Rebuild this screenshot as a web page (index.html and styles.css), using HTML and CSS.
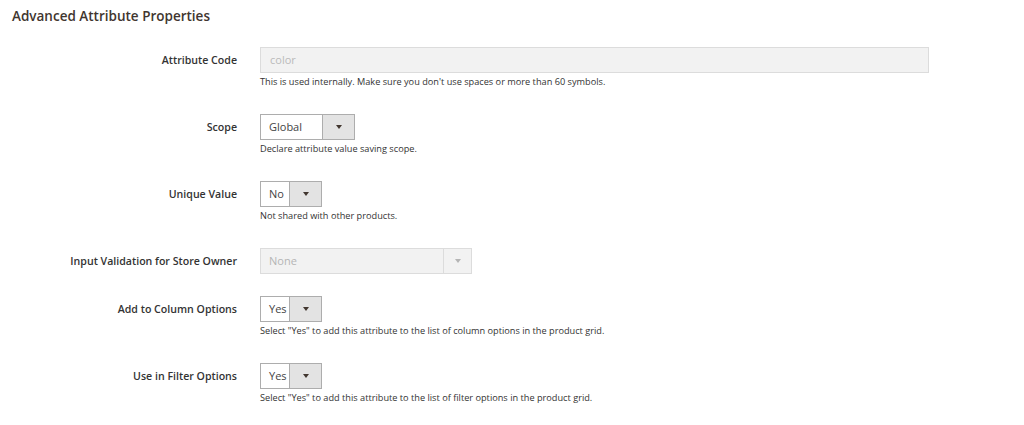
FILE: index.html
```html
<!DOCTYPE html>
<html lang="en">
<head>
    <meta charset="UTF-8">
    <meta name="viewport" content="width=device-width, initial-scale=1.0">
    <title>Advanced Attribute Properties</title>
    <link rel="stylesheet" href="styles.css">
</head>
<body>
<div class="fieldset">
    <h3 class="legend">Advanced Attribute Properties</h3>

    <div class="field">
        <label class="label">Attribute Code</label>
        <div class="control">
            <div class="input disabled code">color</div>
            <div class="note">This is used internally. Make sure you don't use spaces or more than 60 symbols.</div>
        </div>
    </div>

    <div class="field">
        <label class="label">Scope</label>
        <div class="control">
            <div class="select scope"><span class="value">Global</span><span class="arrow"></span></div>
            <div class="note">Declare attribute value saving scope.</div>
        </div>
    </div>

    <div class="field">
        <label class="label">Unique Value</label>
        <div class="control">
            <div class="select small"><span class="value">No</span><span class="arrow"></span></div>
            <div class="note">Not shared with other products.</div>
        </div>
    </div>

    <div class="field">
        <label class="label">Input Validation for Store Owner</label>
        <div class="control">
            <div class="select wide disabled"><span class="value">None</span><span class="arrow"></span></div>
        </div>
    </div>

    <div class="field">
        <label class="label">Add to Column Options</label>
        <div class="control">
            <div class="select small"><span class="value">Yes</span><span class="arrow"></span></div>
            <div class="note">Select "Yes" to add this attribute to the list of column options in the product grid.</div>
        </div>
    </div>

    <div class="field">
        <label class="label">Use in Filter Options</label>
        <div class="control">
            <div class="select small"><span class="value">Yes</span><span class="arrow"></span></div>
            <div class="note">Select "Yes" to add this attribute to the list of filter options in the product grid.</div>
        </div>
    </div>
</div>
</body>
</html>
```

FILE: styles.css
```css
body, html {
    margin: 0;
    background-color: #ffffff;
    font-family: "Open Sans", "Liberation Sans", Arial, sans-serif;
    color: #303030;
}

.fieldset {
    padding: 6px 0 0 12px;
}

.legend {
    margin: 0 0 21px;
    font-size: 13.5px;
    font-weight: 600;
    line-height: 20px;
    color: #41362f;
}

.field {
    display: grid;
    grid-template-columns: 225px 1fr;
    column-gap: 23px;
    margin-bottom: 22px;
}

.label {
    text-align: right;
    font-size: 10.6px;
    font-weight: 600;
    line-height: 26px;
    color: #333333;
}

.input,
.select {
    box-sizing: border-box;
    height: 26px;
    border: 1px solid #adadad;
    background-color: #ffffff;
    font-size: 11px;
    line-height: 24px;
    color: #444444;
}

.input {
    width: 669px;
    padding-left: 9px;
}

.input.disabled {
    background-color: #f2f2f2;
    border-color: #dcdcdc;
    color: #bababa;
}

.select {
    display: flex;
}

.select .value {
    flex: 1;
    padding-left: 8px;
}

.select .arrow {
    width: 31px;
    border-left: 1px solid #adadad;
    background-color: #e3e3e3;
    display: flex;
    align-items: center;
    justify-content: center;
}

.select .arrow::after {
    content: "";
    border-left: 3px solid transparent;
    border-right: 3px solid transparent;
    border-top: 4px solid #41362f;
}

.select.scope {
    width: 95px;
}

.select.small {
    width: 62px;
}

.select.wide {
    width: 212px;
}

.select.disabled {
    background-color: #f2f2f2;
    border-color: #dcdcdc;
    color: #b5b5b5;
}

.select.disabled .arrow {
    width: 27px;
    background-color: #f2f2f2;
    border-left-color: #dcdcdc;
}

.select.disabled .arrow::after {
    border-top-color: #b5b5b5;
}

.note {
    margin: 1px 0 2px;
    font-size: 9.2px;
    line-height: 16px;
    color: #333333;
}
```
